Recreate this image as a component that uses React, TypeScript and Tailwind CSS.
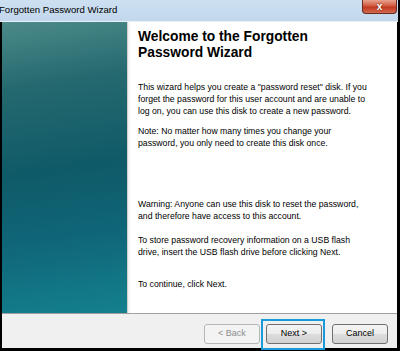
import React from "react";

const FONT = "font-['Liberation_Sans',Arial,sans-serif]";

function WizButton({ label, disabled, focused }: { label: string; disabled?: boolean; focused?: boolean }) {
  return (
    <div className="relative">
      <div
        className={`flex h-[20px] w-[56px] items-center justify-center rounded-[3px] border text-[9px] ${
          disabled
            ? "border-[#b4b8bb] bg-[#f3f3f3] text-[#8d8d8d]"
            : "border-[#707070] bg-[linear-gradient(#f4f4f4,#ececec_48%,#dcdcdc_52%,#d2d2d2)] text-black"
        }`}
      >
        {label}
      </div>
      {focused && (
        <div className="pointer-events-none absolute -bottom-[6px] -left-[5px] -right-[3px] -top-[5px] border-2 border-[#1a9ad8]" />
      )}
    </div>
  );
}

export default function App() {
  return (
    <div className={`flex h-[351px] w-[400px] flex-col bg-black ${FONT}`}>
      {/* title bar */}
      <div className="mr-[2px] flex h-[22px] items-start border-b border-[#e8f0f8] bg-[linear-gradient(#cde0f2,#c2d7ec)]">
        <span className="-ml-[1px] mt-[3px] text-[9.6px] leading-[13px] text-black">Forgotten Password Wizard</span>
        <div className="ml-auto mr-[1px] flex h-[14px] w-[35px] items-center justify-center rounded-b-[4px] border border-t-0 border-[#6b2a22] bg-[linear-gradient(#e8a38f,#d1593f_45%,#c2391f_55%,#d26a4f)]">
          <span className="text-[10px] font-bold leading-none text-white [text-shadow:0_0_2px_#5a1a10]">x</span>
        </div>
      </div>

      {/* body */}
      <div className="mb-[3px] ml-[2px] mr-[3px] flex flex-1 flex-col bg-[#f0f0f0]">
        <div className="flex flex-1">
          <div className="w-[125px] bg-[linear-gradient(172deg,#4b8a89_0%,#25696f_22%,#0f5a68_50%,#0f6577_72%,#14808e_100%)]" />
          <div className="w-[1px] bg-[#cfcfcf]" />
          <div className="w-[2px] bg-[#f4f4f4]" />
          <div className="flex-1 bg-white pl-[8px] pt-[7px] text-black">
            <div className="text-[13.8px] font-bold leading-[16px]">
              Welcome to the Forgotten
              <br />
              Password Wizard
            </div>
            <div className="mt-[20px] whitespace-nowrap text-[8.7px] leading-[12px]">
              <p>
                This wizard helps you create a "password reset" disk. If you
                <br />
                forget the password for this user account and are unable to
                <br />
                log on, you can use this disk to create a new password.
              </p>
              <p className="mt-[8px]">
                Note: No matter how many times you change your
                <br />
                password, you only need to create this disk once.
              </p>
              <p className="mt-[49px]">
                Warning: Anyone can use this disk to reset the password,
                <br />
                and therefore have access to this account.
              </p>
              <p className="mt-[12px]">
                To store password recovery information on a USB flash
                <br />
                drive, insert the USB flash drive before clicking Next.
              </p>
              <p className="mt-[20px]">To continue, click Next.</p>
            </div>
          </div>
        </div>

        {/* button strip */}
        <div className="flex h-[35px] items-start justify-end gap-[6px] border-t border-[#a0a0a0] pr-[9px] pt-[10px]">
          <WizButton label="< Back" disabled />
          <div className="mr-[4px]">
            <WizButton label="Next >" focused />
          </div>
          <WizButton label="Cancel" />
        </div>
      </div>
    </div>
  );
}
